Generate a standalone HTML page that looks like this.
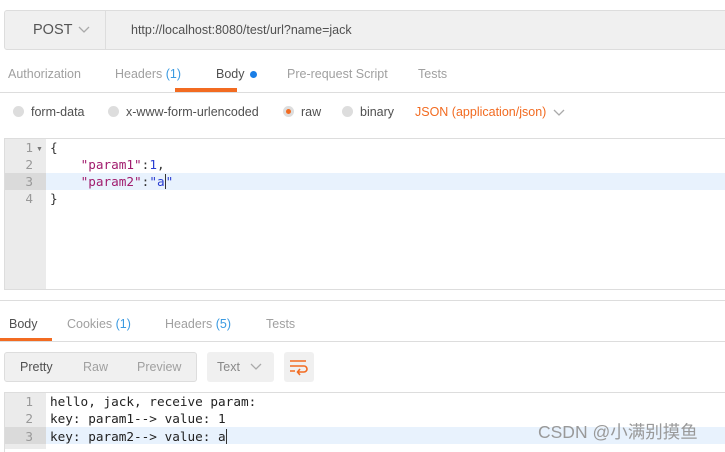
<!DOCTYPE html>
<html><head><meta charset="utf-8"><style>
*{margin:0;padding:0;box-sizing:border-box}
body{width:725px;height:449px;overflow:hidden;background:#fff;font-family:"Liberation Sans","DejaVu Sans",sans-serif;position:relative;color:#505050}
.a{position:absolute}
.mono{font-family:"DejaVu Sans Mono","Liberation Mono",monospace;font-size:12.7px}
.gray{color:#a0a0a0}
.blue{color:#3b9ae1}
.radio{position:absolute;width:11px;height:11px;border-radius:50%;background:#ddd;top:106px}
</style></head><body>
<div class="a" style="left:4px;top:10px;width:725px;height:40px;background:#f0f0f0;border:1px solid #ddd;border-radius:3px"></div>
<div class="a" style="left:105px;top:11px;width:1px;height:38px;background:#ddd"></div>
<div class="a" style="left:33px;top:22px;font-size:14.5px;color:#555">POST</div>
<svg class="a" style="left:78px;top:26px" width="12" height="8"><path d="M1 1L6 6L11 1" stroke="#aaa" fill="none" stroke-width="1.3"/></svg>
<div class="a" style="left:131px;top:23px;font-size:12.5px;color:#505050">http://localhost:8080/test/url?name=jack</div>

<div class="a gray" style="left:8px;top:67px;font-size:12.5px">Authorization</div>
<div class="a gray" style="left:115px;top:67px;font-size:12.5px">Headers <span class="blue">(1)</span></div>
<div class="a" style="left:216px;top:67px;font-size:12.5px;color:#505050">Body</div>
<div class="a" style="left:250px;top:71px;width:7px;height:7px;border-radius:50%;background:#1a7ee6"></div>
<div class="a gray" style="left:287px;top:67px;font-size:12.5px">Pre-request Script</div>
<div class="a gray" style="left:418px;top:67px;font-size:12.5px">Tests</div>
<div class="a" style="left:0;top:92px;width:725px;height:1px;background:#ddd"></div>
<div class="a" style="left:175px;top:88px;width:62px;height:4px;background:#f26b21"></div>

<div class="radio" style="left:13px"></div>
<div class="a" style="left:31px;top:105px;font-size:12.5px">form-data</div>
<div class="radio" style="left:108px"></div>
<div class="a" style="left:126px;top:105px;font-size:12.5px">x-www-form-urlencoded</div>
<div class="radio" style="left:283px;background:#ddd"><div style="margin:3px;width:5px;height:5px;border-radius:50%;background:#f26b21"></div></div>
<div class="a" style="left:301px;top:105px;font-size:12.5px">raw</div>
<div class="radio" style="left:342px"></div>
<div class="a" style="left:360px;top:105px;font-size:12.5px">binary</div>
<div class="a" style="left:415px;top:105px;font-size:12.5px;color:#f26b21">JSON (application/json)</div>
<svg class="a" style="left:553px;top:109px" width="12" height="8"><path d="M1 1L6 6L11 1" stroke="#aaa" fill="none" stroke-width="1.3"/></svg>

<div class="a" style="left:4px;top:138px;width:725px;height:152px;border:1px solid #ddd;border-right:none"></div>
<div class="a" style="left:5px;top:139px;width:41px;height:150px;background:#ebebeb"></div>
<div class="a" style="left:5px;top:173px;width:41px;height:17px;background:#dadada"></div>
<div class="a" style="left:46px;top:173px;width:679px;height:17px;background:#e8f2fd"></div>
<div class="a mono" style="left:0;top:139px;width:33px;text-align:right;line-height:17px;color:#999">1<br>2<br>3<br>4</div>
<div class="a" style="left:36px;top:146px;font-size:7px;color:#777">▼</div>
<div class="a mono" style="left:50px;top:139px;line-height:17px;color:#333;white-space:pre">{
    <span style="color:#a11d6e">"param1"</span>:<span style="color:#2a3ed1">1</span>,
    <span style="color:#a11d6e">"param2"</span>:<span style="color:#2a3ed1">"a</span><span style="border-left:1px solid #333;color:#2a3ed1">"</span>
}</div>

<div class="a" style="left:0;top:300px;width:725px;height:1px;background:#ddd"></div>
<div class="a" style="left:9px;top:317px;font-size:12.5px">Body</div>
<div class="a gray" style="left:67px;top:317px;font-size:12.5px">Cookies <span class="blue">(1)</span></div>
<div class="a gray" style="left:165px;top:317px;font-size:12.5px">Headers <span class="blue">(5)</span></div>
<div class="a gray" style="left:266px;top:317px;font-size:12.5px">Tests</div>
<div class="a" style="left:0;top:341px;width:725px;height:1px;background:#ddd"></div>
<div class="a" style="left:0;top:338px;width:52px;height:3px;background:#f26b21"></div>

<div class="a" style="left:4px;top:352px;width:193px;height:30px;background:#f0f0f0;border:1px solid #ddd;border-radius:3px"></div>
<div class="a" style="left:20px;top:360px;font-size:12.5px">Pretty</div>
<div class="a gray" style="left:83px;top:360px;font-size:12.5px">Raw</div>
<div class="a gray" style="left:137px;top:360px;font-size:12.5px">Preview</div>
<div class="a" style="left:207px;top:352px;width:67px;height:30px;background:#f0f0f0;border-radius:3px"></div>
<div class="a" style="left:217px;top:360px;font-size:12.5px;color:#888">Text</div>
<svg class="a" style="left:250px;top:363px" width="12" height="8"><path d="M1 1L6 6L11 1" stroke="#aaa" fill="none" stroke-width="1.3"/></svg>
<div class="a" style="left:284px;top:352px;width:30px;height:30px;background:#f0f0f0;border-radius:3px"></div>
<svg class="a" style="left:289px;top:358px" width="20" height="18"><path d="M1 3H17M1 8H15a3 3 0 0 1 0 6H9M1 13H6M11 11L8.5 14L11 17" stroke="#f26b21" fill="none" stroke-width="1.6"/></svg>

<div class="a" style="left:4px;top:392px;width:725px;height:60px;border-top:1px solid #ddd;border-left:1px solid #ddd"></div>
<div class="a" style="left:5px;top:393px;width:41px;height:56px;background:#ebebeb"></div>
<div class="a" style="left:5px;top:427px;width:41px;height:17px;background:#dadada"></div>
<div class="a" style="left:46px;top:427px;width:679px;height:17px;background:#e8f2fd"></div>
<div class="a mono" style="left:0;top:393px;width:33px;text-align:right;line-height:17.3px;color:#999">1<br>2<br>3</div>
<div class="a mono" style="left:50px;top:393px;line-height:17.3px;color:#222;white-space:pre">hello, jack, receive param:
key: param1--> value: 1
key: param2--> value: a<span style="border-left:1px solid #333"></span></div>
<div class="a" style="left:538px;top:419px;font-size:17.5px;color:#999;font-family:'Liberation Sans','Noto Sans CJK SC',sans-serif">CSDN @小满别摸鱼</div>
</body></html>
